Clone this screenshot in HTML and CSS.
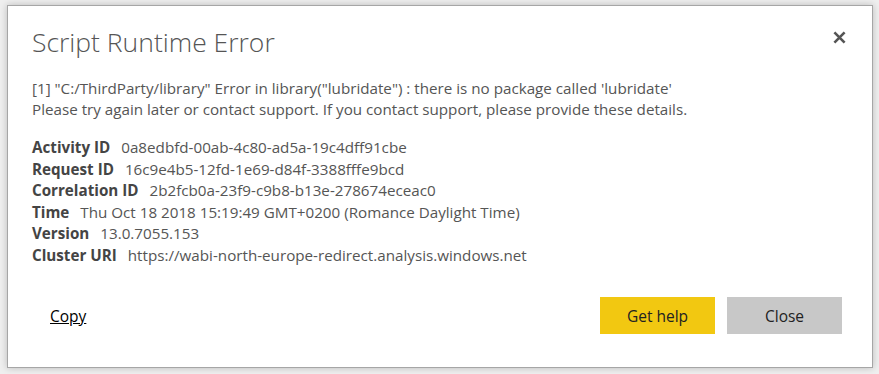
FILE: index.html
```html
<!DOCTYPE html>
<html>
<head>
<meta charset="utf-8">
<link rel="stylesheet" href="styles.css">
</head>
<body>
<div class="dialog">
  <div class="header">
    <h1 class="title">Script Runtime Error</h1>
    <button class="close-x" aria-label="Close">
      <svg width="13" height="13" viewBox="0 0 13 13"><path d="M1.4 1.4 L11.6 11.6 M11.6 1.4 L1.4 11.6" stroke="#555" stroke-width="2.6" fill="none"/></svg>
    </button>
  </div>
  <div class="message">
    <div>[1] "C:/ThirdParty/library" Error in library("lubridate") : there is no package called 'lubridate'</div>
    <div>Please try again later or contact support. If you contact support, please provide these details.</div>
  </div>
  <div class="details">
    <div class="row"><span class="label">Activity ID</span><span>0a8edbfd-00ab-4c80-ad5a-19c4dff91cbe</span></div>
    <div class="row"><span class="label">Request ID</span><span>16c9e4b5-12fd-1e69-d84f-3388fffe9bcd</span></div>
    <div class="row"><span class="label">Correlation ID</span><span>2b2fcb0a-23f9-c9b8-b13e-278674eceac0</span></div>
    <div class="row"><span class="label">Time</span><span>Thu Oct 18 2018 15:19:49 GMT+0200 (Romance Daylight Time)</span></div>
    <div class="row"><span class="label">Version</span><span>13.0.7055.153</span></div>
    <div class="row"><span class="label">Cluster URI</span><span>https://wabi-north-europe-redirect.analysis.windows.net</span></div>
  </div>
  <div class="footer">
    <a class="copy" href="#">Copy</a>
    <div class="buttons">
      <button class="btn btn-primary">Get help</button>
      <button class="btn btn-secondary">Close</button>
    </div>
  </div>
</div>
</body>
</html>
```
FILE: styles.css
```css
html, body {
  margin: 0;
  padding: 0;
}
body {
  background: #efefef;
  width: 879px;
  height: 374px;
  overflow: hidden;
  font-family: "Open Sans", "Noto Sans", sans-serif;
  color: #555;
}
.dialog {
  box-sizing: border-box;
  margin: 5px 0 0 7px;
  width: 866px;
  height: 363px;
  background: #fff;
  border: 1px solid #a6a6a6;
  box-shadow: 0 0 7px rgba(0, 0, 0, 0.22);
  padding: 0 30px 0 24px;
  display: flex;
  flex-direction: column;
}
.header {
  display: flex;
  justify-content: space-between;
  align-items: flex-start;
  padding-top: 16px;
}
.title {
  margin: 0;
  font-size: 26.5px;
  font-weight: 300;
  line-height: 40px;
  color: #555;
}
.close-x {
  border: 0;
  background: none;
  padding: 0;
  margin: 9px -4px 0 0;
  width: 13px;
  height: 13px;
  display: flex;
}
.message {
  margin-top: 16px;
  font-size: 15.2px;
  line-height: 21px;
  color: #555;
}
.details {
  margin-top: 17px;
  font-size: 15.2px;
  line-height: 21.6px;
  color: #555;
}
.label {
  font-weight: 700;
  color: #444;
  margin-right: 11px;
}
.footer {
  margin-top: auto;
  margin-bottom: 33px;
  display: flex;
  justify-content: space-between;
  align-items: center;
  padding-left: 18px;
}
.copy {
  color: #000;
  font-size: 15.5px;
  text-decoration: underline;
}
.buttons {
  display: flex;
  gap: 12px;
}
.btn {
  width: 115px;
  height: 37px;
  border: 0;
  font-family: "Open Sans", "Noto Sans", sans-serif;
  font-size: 15.5px;
  color: #222;
  padding: 0;
}
.btn-primary {
  background: #f2c811;
}
.btn-secondary {
  background: #c8c8c8;
}
```
